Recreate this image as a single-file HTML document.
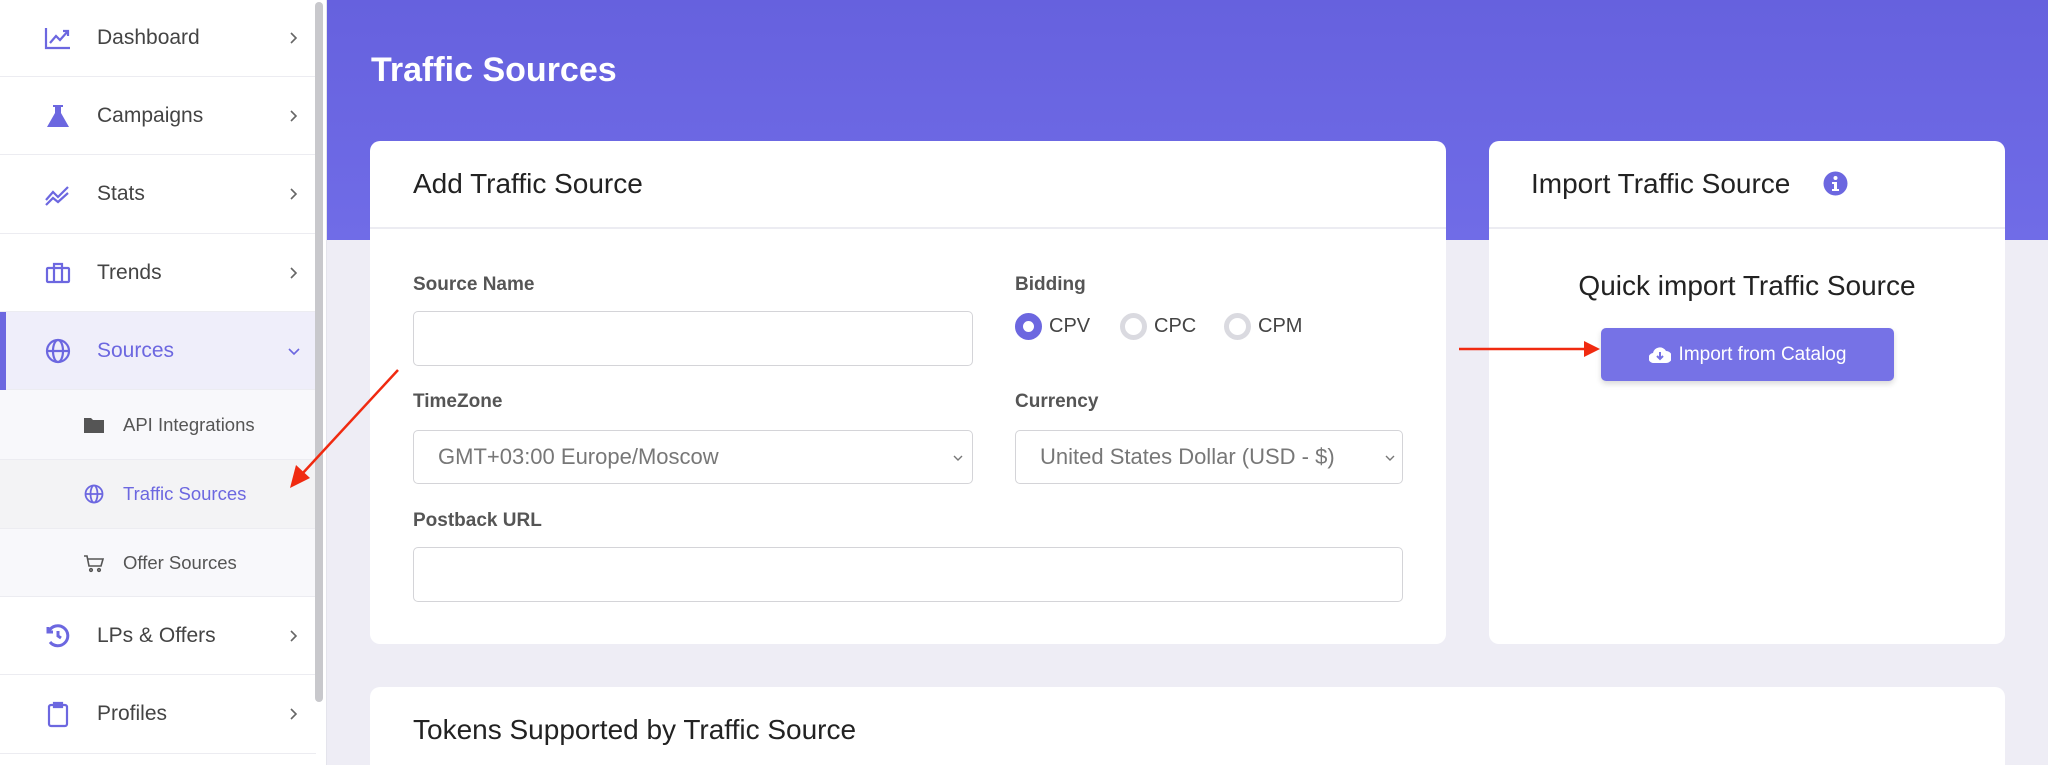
<!DOCTYPE html>
<html style="overflow:hidden;height:765px"><head><meta charset="utf-8"><style>
*{box-sizing:border-box;margin:0;padding:0}
body{width:2048px;height:765px;overflow:hidden;position:relative;background:#eeedf5;font-family:"Liberation Sans",sans-serif;color:#333}
.a{position:absolute}
#side{left:0;top:0;width:327px;height:765px;background:#fff;border-right:1px solid #e4e4ec}
.row{position:absolute;left:0;width:316px;border-bottom:1px solid #ececf1;display:flex;align-items:center}
.row .t{position:absolute;left:97px;font-size:21px;color:#444}
.row .ic{position:absolute;left:44px;width:28px;height:28px}
.row .ch{position:absolute;left:287px;width:14px;height:14px}
.sub{background:#f8f8fb}
.sub .t{left:123px;font-size:18.5px;color:#555}
.sub .ic{left:83px;width:22px;height:22px}
.card{position:absolute;background:#fff;border-radius:10px}
.lbl{position:absolute;font-size:19px;font-weight:bold;color:#555}
.inp{position:absolute;border:1.5px solid #d4d4d8;border-radius:5px;background:#fff}
.sel{font-size:22px;color:#777;padding-left:24px;display:flex;align-items:center}
.radio{position:absolute;width:27px;height:27px;border-radius:50%;border:5px solid #dadae0}
.rt{position:absolute;font-size:20px;color:#444}
</style></head><body>
<div class="a" style="left:327px;top:0;width:1721px;height:240px;background:linear-gradient(#6661de,#706ce7)"></div>
<div class="a" style="left:371px;top:51px;font-size:34px;font-weight:bold;color:#fff">Traffic Sources</div>

<div id="side" class="a">
 <div class="row" style="top:0;height:77px"><svg class="ic" viewBox="0 0 28 28" fill="none" stroke="#6c67e0" stroke-width="2.2"><path d="M2 4V24H26M6 19L12 12L16 16L24 7M19 7H24V12"/></svg><span class="t">Dashboard</span><svg class="ch" viewBox="0 0 14 14" fill="none" stroke="#666" stroke-width="1.6"><path d="M4 2L9 7L4 12"/></svg></div>
 <div class="row" style="top:77px;height:78px"><svg class="ic" viewBox="0 0 28 28" fill="#6c67e0"><path d="M9 3H19V5H17V11L25 25H3L11 11V5H9Z"/></svg><span class="t">Campaigns</span><svg class="ch" viewBox="0 0 14 14" fill="none" stroke="#666" stroke-width="1.6"><path d="M4 2L9 7L4 12"/></svg></div>
 <div class="row" style="top:155px;height:79px"><svg class="ic" viewBox="0 0 28 28" fill="none" stroke="#6c67e0" stroke-width="2.2"><path d="M2 20L9 12L14 17L24 7M2 25L9 18L14 22L24 13"/></svg><span class="t">Stats</span><svg class="ch" viewBox="0 0 14 14" fill="none" stroke="#666" stroke-width="1.6"><path d="M4 2L9 7L4 12"/></svg></div>
 <div class="row" style="top:234px;height:78px"><svg class="ic" viewBox="0 0 28 28" fill="none" stroke="#6c67e0" stroke-width="2.2"><rect x="3" y="9" width="22" height="14" rx="1"/><path d="M10 9V5H18V9M10 9V23M18 9V23"/></svg><span class="t">Trends</span><svg class="ch" viewBox="0 0 14 14" fill="none" stroke="#666" stroke-width="1.6"><path d="M4 2L9 7L4 12"/></svg></div>
 <div class="row" style="top:312px;height:78px;background:#efeefa"><div class="a" style="left:0;top:0;width:6px;height:78px;background:#6c67e0"></div><svg class="ic" viewBox="0 0 28 28" fill="none" stroke="#6c67e0" stroke-width="2.2"><circle cx="14" cy="14" r="11"/><ellipse cx="14" cy="14" rx="5" ry="11"/><path d="M3 14H25"/></svg><span class="t" style="color:#6c67e0">Sources</span><svg class="ch" viewBox="0 0 14 14" fill="none" stroke="#6c67e0" stroke-width="1.6"><path d="M2 5L7 10L12 5"/></svg></div>
 <div class="row sub" style="top:390px;height:70px"><svg class="ic" viewBox="0 0 22 22" fill="#555"><path d="M1 4H8L10 6H21V19H1Z"/></svg><span class="t">API Integrations</span></div>
 <div class="row sub" style="top:460px;height:69px;background:#f3f3f5"><svg class="ic" viewBox="0 0 22 22" fill="none" stroke="#6c67e0" stroke-width="1.8"><circle cx="11" cy="11" r="8.5"/><ellipse cx="11" cy="11" rx="3.5" ry="8.5"/><path d="M2.5 11H19.5"/></svg><span class="t" style="color:#6c67e0">Traffic Sources</span></div>
 <div class="row sub" style="top:529px;height:68px"><svg class="ic" viewBox="0 0 22 22" fill="none" stroke="#555" stroke-width="1.6"><path d="M1 4H4L6 14H18L20 7H5"/><circle cx="8" cy="18" r="1.3"/><circle cx="16" cy="18" r="1.3"/></svg><span class="t">Offer Sources</span></div>
 <div class="row" style="top:597px;height:78px"><svg class="ic" viewBox="0 0 28 28" fill="none" stroke="#6c67e0" stroke-width="3"><path d="M5 9A10 10 0 1 1 6 20M4 5V10H9M14 9V14L17 16"/></svg><span class="t">LPs &amp; Offers</span><svg class="ch" viewBox="0 0 14 14" fill="none" stroke="#666" stroke-width="1.6"><path d="M4 2L9 7L4 12"/></svg></div>
 <div class="row" style="top:675px;height:79px"><svg class="ic" viewBox="0 0 28 28" fill="none" stroke="#6c67e0" stroke-width="2.2"><rect x="5" y="5" width="18" height="21" rx="2"/><path d="M10 3H18V7H10Z"/></svg><span class="t">Profiles</span><svg class="ch" viewBox="0 0 14 14" fill="none" stroke="#666" stroke-width="1.6"><path d="M4 2L9 7L4 12"/></svg></div>
 <div class="a" style="left:315px;top:2px;width:8px;height:700px;border-radius:4px;background:#c8c8cc"></div>
</div>

<div class="card" style="left:370px;top:141px;width:1076px;height:503px">
 <div class="a" style="left:43px;top:27px;font-size:28px;color:#222">Add Traffic Source</div>
 <div class="a" style="left:0;top:86px;width:1076px;height:2px;background:#ececf2"></div>
 <div class="lbl" style="left:43px;top:133px">Source Name</div>
 <div class="inp" style="left:43px;top:170px;width:560px;height:55px"></div>
 <div class="lbl" style="left:645px;top:133px">Bidding</div>
 <div class="radio" style="left:645px;top:172px;border-color:#6c67e0;border-width:8px"></div>
 <div class="rt" style="left:679px;top:174px">CPV</div>
 <div class="radio" style="left:750px;top:172px"></div>
 <div class="rt" style="left:784px;top:174px">CPC</div>
 <div class="radio" style="left:854px;top:172px"></div>
 <div class="rt" style="left:888px;top:174px">CPM</div>
 <div class="lbl" style="left:43px;top:250px">TimeZone</div>
 <div class="inp sel" style="left:43px;top:289px;width:560px;height:54px">GMT+03:00 Europe/Moscow<svg class="a" style="right:8px;top:22px" width="12" height="10" viewBox="0 0 12 10" fill="none" stroke="#777" stroke-width="1.4"><path d="M2 3L6 7L10 3"/></svg></div>
 <div class="lbl" style="left:645px;top:250px">Currency</div>
 <div class="inp sel" style="left:645px;top:289px;width:388px;height:54px">United States Dollar (USD - $)<svg class="a" style="right:6px;top:22px" width="12" height="10" viewBox="0 0 12 10" fill="none" stroke="#777" stroke-width="1.4"><path d="M2 3L6 7L10 3"/></svg></div>
 <div class="lbl" style="left:43px;top:369px">Postback URL</div>
 <div class="inp" style="left:43px;top:406px;width:990px;height:55px"></div>
</div>

<div class="card" style="left:1489px;top:141px;width:516px;height:503px">
 <div class="a" style="left:42px;top:27px;font-size:28px;color:#222">Import Traffic Source</div>
 <svg class="a" style="left:334px;top:30px" width="25" height="25" viewBox="0 0 25 25"><circle cx="12.5" cy="12.5" r="12" fill="#6c67e0"/><circle cx="12.5" cy="7" r="2" fill="#fff"/><path d="M9 11H14V18H16V20H9V18H11V13H9Z" fill="#fff"/></svg>
 <div class="a" style="left:0;top:86px;width:516px;height:2px;background:#ececf2"></div>
 <div class="a" style="left:0;top:129px;width:516px;text-align:center;font-size:28px;color:#222">Quick import Traffic Source</div>
 <div class="a" style="left:112px;top:187px;width:293px;height:53px;background:#7672e6;border-radius:5px;box-shadow:0 3px 6px rgba(0,0,0,.15);color:#fff;font-size:19px;display:flex;align-items:center;justify-content:center;gap:8px"><svg width="22" height="18" viewBox="0 0 22 18"><path d="M5 17A5 5 0 0 1 4 7A7 7 0 0 1 17 5A6 6 0 0 1 17 17Z" fill="#fff"/><path d="M11 6V13M8 10L11 13L14 10" stroke="#7672e6" stroke-width="2" fill="none"/></svg>Import from Catalog</div>
</div>

<div class="card" style="left:370px;top:687px;width:1635px;height:78px;border-radius:10px 10px 0 0">
 <div class="a" style="left:43px;top:27px;font-size:28px;color:#222">Tokens Supported by Traffic Source</div>
</div>

<svg class="a" style="left:0;top:0" width="2048" height="765">
 <path d="M398 370L302 474" stroke="#f02a10" stroke-width="2.5"/>
 <path d="M290 488L296 465L310 478Z" fill="#f02a10"/>
 <path d="M1459 349H1585" stroke="#f02a10" stroke-width="2.5"/>
 <path d="M1600 349L1584 341V357Z" fill="#f02a10"/>
</svg>
</body></html>
